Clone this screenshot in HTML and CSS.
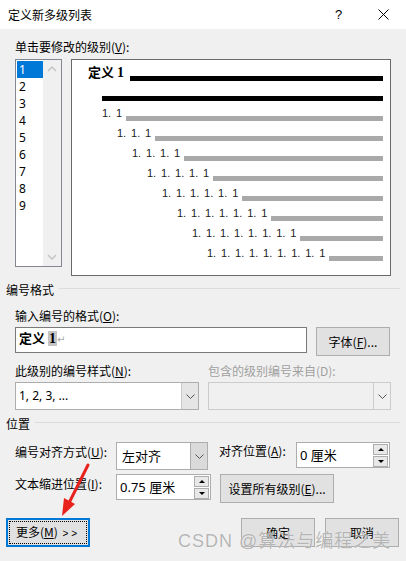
FILE: index.html
```html
<!DOCTYPE html>
<html lang="zh-CN">
<head>
    <meta charset="UTF-8">
    <meta name="viewport" content="width=device-width, initial-scale=1.0">
    <title>定义新多级列表</title>
    <link rel="stylesheet" href="styles.css">
</head>
<body>
    <div class="dialog">
        <div class="titlebar">
            <span class="title">定义新多级列表</span>
            <span class="help">?</span>
            <svg class="close" width="11" height="11" viewBox="0 0 11 11">
                <path d="M0.5 0.5L10.5 10.5M10.5 0.5L0.5 10.5" stroke="#000" stroke-width="1" fill="none"/>
            </svg>
        </div>

        <div class="content">
            <div class="label">单击要修改的级别(<u>V</u>):</div>
            <div class="level-row">
                <div class="listbox">
                    <ul class="levels">
                        <li class="selected">1</li>
                        <li>2</li>
                        <li>3</li>
                        <li>4</li>
                        <li>5</li>
                        <li>6</li>
                        <li>7</li>
                        <li>8</li>
                        <li>9</li>
                    </ul>
                    <div class="scrollbar">
                        <svg width="18" height="17" viewBox="0 0 18 17">
                            <polyline points="5,11 9,7 13,11" stroke="#c2c2c2" stroke-width="1.4" fill="none"/>
                        </svg>
                        <svg width="18" height="17" viewBox="0 0 18 17">
                            <polyline points="5,6 9,10 13,6" stroke="#c2c2c2" stroke-width="1.4" fill="none"/>
                        </svg>
                    </div>
                </div>

                <div class="preview">
                    <div class="pv-row pv-head">
                        <span class="pv-title">定义 <b>1</b></span>
                        <span class="bar black"></span>
                    </div>
                    <div class="pv-row l1"><span class="bar black"></span></div>
                    <div class="pv-row l1"><span class="num">1. 1</span><span class="bar"></span></div>
                    <div class="pv-row l2"><span class="num">1. 1. 1</span><span class="bar"></span></div>
                    <div class="pv-row l3"><span class="num">1. 1. 1. 1</span><span class="bar"></span></div>
                    <div class="pv-row l4"><span class="num">1. 1. 1. 1. 1</span><span class="bar"></span></div>
                    <div class="pv-row l5"><span class="num">1. 1. 1. 1. 1. 1</span><span class="bar"></span></div>
                    <div class="pv-row l6"><span class="num">1. 1. 1. 1. 1. 1. 1</span><span class="bar"></span></div>
                    <div class="pv-row l7"><span class="num">1. 1. 1. 1. 1. 1. 1. 1</span><span class="bar"></span></div>
                    <div class="pv-row l8"><span class="num">1. 1. 1. 1. 1. 1. 1. 1. 1</span><span class="bar"></span></div>
                </div>
            </div>

            <div class="group">编号格式</div>

            <div class="label gap-top">输入编号的格式(<u>O</u>):</div>
            <div class="format-row">
                <div class="format-input">
                    <b class="cjk">定义</b> <b class="hl">1</b><span class="ret">↵</span>
                </div>
                <button class="btn font-btn">字体(<u>F</u>)...</button>
            </div>

            <div class="style-row">
                <div>
                    <div class="label flat">此级别的编号样式(<u>N</u>):</div>
                    <div class="select wide">
                        <span class="value">1, 2, 3, ...</span>
                        <span class="drop">
                            <svg width="9" height="5" viewBox="0 0 9 5"><polyline points="0.5,0.5 4.5,4.5 8.5,0.5" stroke="#555" fill="none"/></svg>
                        </span>
                    </div>
                </div>
                <div>
                    <div class="label flat disabled">包含的级别编号来自(D):</div>
                    <div class="select wide off">
                        <span class="value"></span>
                        <span class="drop">
                            <svg width="9" height="5" viewBox="0 0 9 5"><polyline points="0.5,0.5 4.5,4.5 8.5,0.5" stroke="#555" fill="none"/></svg>
                        </span>
                    </div>
                </div>
            </div>

            <div class="group">位置</div>

            <div class="pos-row first">
                <div class="label flat pos-label">编号对齐方式(<u>U</u>):</div>
                <div class="select align-sel">
                    <span class="value cjk-val">左对齐</span>
                    <span class="drop">
                        <svg width="9" height="5" viewBox="0 0 9 5"><polyline points="0.5,0.5 4.5,4.5 8.5,0.5" stroke="#555" fill="none"/></svg>
                    </span>
                </div>
                <div class="label flat at-label">对齐位置(<u>A</u>):</div>
                <div class="spinner at-spin">
                    <span class="value">0 厘米</span>
                    <span class="spin">
                        <span class="up"></span>
                        <span class="down"></span>
                    </span>
                </div>
            </div>

            <div class="pos-row">
                <div class="label flat pos-label">文本缩进位置(<u>I</u>):</div>
                <div class="spinner indent-spin">
                    <span class="value">0.75 厘米</span>
                    <span class="spin">
                        <span class="up"></span>
                        <span class="down"></span>
                    </span>
                </div>
                <button class="btn all-btn">设置所有级别(<u>E</u>)...</button>
            </div>

            <div class="footer">
                <button class="btn more-btn"><span>更多(<u>M</u>) <span class="arrows">&gt;&gt;</span></span></button>
                <div class="actions">
                    <button class="btn">确定</button>
                    <button class="btn">取消</button>
                </div>
            </div>
        </div>

        <svg class="pointer" width="40" height="62" viewBox="0 0 40 62">
            <line x1="33" y1="5" x2="15" y2="41" stroke="#e8211d" stroke-width="3" stroke-linecap="round"/>
            <polygon points="7,56 20,44 9,38" fill="#e8211d"/>
        </svg>
        <div class="watermark">CSDN @算法与编程之美</div>
    </div>
</body>
</html>
```

FILE: styles.css
```css
body {
    margin: 0;
    background: #f0f0f0;
    font-family: "Microsoft YaHei UI", "Noto Sans CJK SC", sans-serif;
    font-size: 12px;
    color: #000;
}
.dialog {
    position: relative;
    width: 406px;
    height: 561px;
    overflow: hidden;
}
.titlebar {
    height: 29px;
    display: flex;
    align-items: center;
    background: #fff;
    padding: 0 17px 0 8px;
}
.title {
    flex: 1;
    line-height: 16px;
}
.help {
    width: 11px;
    text-align: center;
    font-family: "Segoe UI", "Liberation Sans", sans-serif;
    font-size: 13px;
    margin-right: 34px;
}
.close {
    display: block;
}
.content {
    padding: 10px 6px 0 6px;
}
.label {
    line-height: 16px;
    padding-left: 9px;
    white-space: nowrap;
}
.label.flat {
    padding-left: 0;
}
.label.disabled {
    color: #a0a0a0;
}
.gap-top {
    margin-top: 10px;
}

/* level list + preview */
.level-row {
    display: flex;
    align-items: flex-start;
    margin-top: 4px;
    padding-left: 9px;
}
.listbox {
    box-sizing: border-box;
    width: 47px;
    height: 208px;
    border: 1px solid #828790;
    background: #fff;
    display: flex;
}
.levels {
    list-style: none;
    margin: 0;
    padding: 1px 0 0 1px;
    width: 26px;
}
.levels li {
    height: 17px;
    line-height: 17px;
    padding-left: 2px;
    font-family: "Segoe UI", "Noto Sans", sans-serif;
    font-size: 12px;
}
.levels li.selected {
    background: #0078d7;
    color: #fff;
}
.scrollbar {
    width: 18px;
    background: #f0f0f0;
    display: flex;
    flex-direction: column;
    justify-content: space-between;
}
.scrollbar svg {
    display: block;
}
.preview {
    box-sizing: border-box;
    width: 320px;
    height: 217px;
    margin-left: 9px;
    border: 1px solid #696969;
    background: #fff;
    padding: 1px 7px 0 0;
}
.pv-row {
    display: flex;
    align-items: flex-end;
    height: 20px;
}
.bar {
    flex: 1;
    height: 5px;
    background: #a9a9a9;
    margin-left: 4px;
}
.bar.black {
    background: #000;
}
.pv-head {
    padding-left: 16px;
}
.pv-title {
    font-weight: bold;
    font-size: 13px;
    line-height: 14px;
    margin-bottom: 1px;
    white-space: nowrap;
}
.pv-title b {
    font-family: "Liberation Serif", serif;
    font-size: 14px;
}
.pv-head .bar {
    margin-left: 6px;
}
.l1 .bar.black {
    margin-left: 0;
}
.num {
    font-family: "Liberation Sans", sans-serif;
    font-size: 11px;
    line-height: 11px;
    margin-bottom: 2px;
    word-spacing: 1.8px;
    color: #1c1c1c;
    white-space: nowrap;
}
.l1 { padding-left: 30px; }
.l2 { padding-left: 45px; }
.l3 { padding-left: 60px; }
.l4 { padding-left: 75px; }
.l5 { padding-left: 90px; }
.l6 { padding-left: 105px; }
.l7 { padding-left: 120px; }
.l8 { padding-left: 135px; }

/* section headers */
.group {
    display: flex;
    align-items: center;
    line-height: 16px;
    margin-top: 6px;
}
.group::after {
    content: "";
    flex: 1;
    height: 1px;
    background: #dcdcdc;
    margin: 0 0 4px 5px;
}

/* numbering format */
.format-row {
    display: flex;
    align-items: flex-start;
    margin-top: 3px;
    padding-left: 9px;
}
.format-input {
    box-sizing: border-box;
    width: 292px;
    height: 26px;
    border: 1px solid #7a7a7a;
    background: #fff;
    padding: 2px 0 0 3px;
    line-height: 16px;
    font-size: 13px;
    white-space: nowrap;
}
.hl {
    background: #c4c4c4;
    font-family: "Liberation Serif", serif;
    font-size: 14px;
    padding: 0 1px;
}
.ret {
    color: #a8a8a8;
    font-size: 10px;
    font-family: "DejaVu Sans", sans-serif;
}
.btn {
    box-sizing: border-box;
    height: 29px;
    border: 1px solid #adadad;
    background: #e1e1e1;
    font-family: "Microsoft YaHei UI", "Noto Sans CJK SC", sans-serif;
    font-size: 12px;
    line-height: 16px;
    color: #000;
    padding: 0;
}
.font-btn {
    width: 74px;
    margin-left: 9px;
}
.style-row {
    display: grid;
    grid-template-columns: 184px 183px;
    column-gap: 9px;
    margin-top: 7px;
    padding-left: 9px;
}
.select {
    box-sizing: border-box;
    height: 28px;
    border: 1px solid #adadad;
    background: #fff;
    display: flex;
    margin-top: 3px;
}
.select .value {
    flex: 1;
    line-height: 26px;
    padding-left: 3px;
    font-family: "Segoe UI", "Noto Sans", "Noto Sans CJK SC", sans-serif;
    white-space: nowrap;
}
.select .value.cjk-val {
    font-family: "Microsoft YaHei UI", "Noto Sans CJK SC", sans-serif;
    font-size: 13px;
    padding-left: 5px;
}
.drop {
    width: 16px;
    background: #e5e5e5;
    border-left: 1px solid #c9c9c9;
    display: flex;
    align-items: center;
    justify-content: center;
}
.select.off {
    border-color: #cccccc;
    background: #f0f0f0;
}
.select.off .drop {
    background: #f0f0f0;
    border-left-color: #cccccc;
}

/* position */
.pos-row {
    display: flex;
    align-items: flex-start;
    margin-top: 4px;
    padding-left: 9px;
}
.pos-row.first {
    margin-top: 10px;
}
.pos-label {
    width: 101px;
    margin-top: 2px;
}
.pos-row .select {
    margin-top: 0;
}
.align-sel {
    width: 92px;
}
.align-sel .drop {
    background: #dadada;
    border-left-color: #adadad;
}
.at-label {
    width: 77px;
    margin: 1px 0 0 11px;
}
.spinner {
    box-sizing: border-box;
    height: 26px;
    border: 1px solid #adadad;
    background: #fff;
    display: flex;
    align-items: center;
}
.spinner .value {
    flex: 1;
    padding-left: 3px;
    font-family: "Segoe UI", "Noto Sans", "Noto Sans CJK SC", sans-serif;
    font-size: 13px;
    line-height: 16px;
    white-space: nowrap;
}
.at-spin {
    width: 94px;
}
.indent-spin {
    width: 95px;
}
.spin {
    display: flex;
    flex-direction: column;
    margin-right: 1px;
}
.spin .up,
.spin .down {
    box-sizing: border-box;
    width: 15px;
    height: 11px;
    border: 1px solid #adadad;
    background: #e8e8e8;
    position: relative;
}
.spin .down {
    margin-top: 1px;
}
.spin .up::after,
.spin .down::after {
    content: "";
    position: absolute;
    left: 4px;
    top: 3px;
    border-left: 3px solid transparent;
    border-right: 3px solid transparent;
}
.spin .up::after {
    border-bottom: 3px solid #000;
}
.spin .down::after {
    border-top: 3px solid #000;
}
.all-btn {
    width: 114px;
    margin-left: 9px;
}

/* footer */
.footer {
    display: flex;
    justify-content: space-between;
    margin-top: 15px;
}
.more-btn {
    width: 84px;
    border: 2px solid #0078d7;
    position: relative;
}
.more-btn::after {
    content: "";
    position: absolute;
    inset: 1px;
    border: 1px dotted #000;
}
.arrows {
    font-family: "Liberation Sans", sans-serif;
    font-size: 10px;
    letter-spacing: 3px;
    margin-left: 2px;
}
.actions {
    display: flex;
    gap: 10px;
    margin-right: 1px;
}
.actions .btn {
    width: 74px;
}

/* annotations over the screenshot */
.pointer {
    position: absolute;
    left: 55px;
    top: 460px;
}
.watermark {
    position: absolute;
    left: 178px;
    top: 529px;
    font-family: "Liberation Sans", "Noto Sans CJK SC", sans-serif;
    font-size: 18px;
    line-height: 24px;
    letter-spacing: 1px;
    color: rgba(120, 120, 120, 0.55);
    text-shadow: 0 0 1px #fff;
    white-space: nowrap;
    pointer-events: none;
}
```
